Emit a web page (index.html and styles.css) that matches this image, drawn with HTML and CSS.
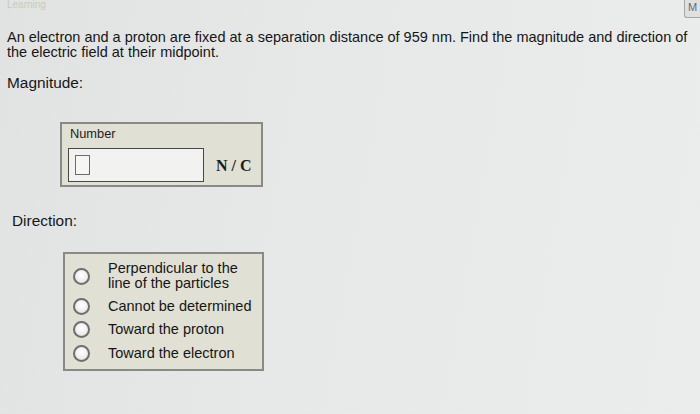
FILE: index.html
```html
<!DOCTYPE html>
<html>
<head>
<meta charset="utf-8">
<link rel="stylesheet" href="styles.css">
</head>
<body>
<div class="page">
  <div class="topbar">
    <span class="brand">Learning</span>
    <span class="topbtn">M</span>
  </div>
  <p class="question">An electron and a proton are fixed at a separation distance of 959 nm. Find the magnitude and direction of the electric field at their midpoint.</p>
  <div class="label mag">Magnitude:</div>
  <div class="numbox">
    <div class="numlabel">Number</div>
    <div class="numrow">
      <div class="input"><span class="caret"></span></div>
      <span class="unit">N / C</span>
    </div>
  </div>
  <div class="label dir">Direction:</div>
  <div class="radiobox">
    <div class="opt"><span class="radio"></span><span class="otext">Perpendicular to the<br>line of the particles</span></div>
    <div class="opt"><span class="radio"></span><span class="otext">Cannot be determined</span></div>
    <div class="opt"><span class="radio"></span><span class="otext">Toward the proton</span></div>
    <div class="opt"><span class="radio"></span><span class="otext">Toward the electron</span></div>
  </div>
</div>
</body>
</html>
```
FILE: styles.css
```css
html, body {
  margin: 0;
  padding: 0;
}
body {
  width: 700px;
  height: 414px;
  overflow: hidden;
  background: linear-gradient(100deg, #e1e3e3 0%, #e7e9e9 45%, #ebedec 100%);
  font-family: "Liberation Sans", Arial, sans-serif;
  color: #161616;
}
.page {
  display: flex;
  flex-direction: column;
  align-items: flex-start;
}
.topbar {
  width: 700px;
  height: 20px;
  display: flex;
  justify-content: space-between;
  align-items: flex-start;
}
.brand {
  font-size: 10px;
  line-height: 10px;
  margin-left: 7px;
  color: #c6ccb8;
}
.topbtn {
  width: 16px;
  height: 18px;
  border: 1px solid #a4a6a6;
  border-top: none;
  border-right: none;
  border-radius: 0 0 0 3px;
  font-size: 11px;
  line-height: 14px;
  padding-left: 3px;
  color: #6a6c6d;
  background: #dfe1e1;
  box-sizing: border-box;
}
.question {
  margin: 9.5px 0 0 7px;
  width: 693px;
  font-size: 14.5px;
  line-height: 15px;
}
.label {
  font-size: 15.4px;
  line-height: 17px;
}
.mag {
  margin: 14.5px 0 0 7px;
}
.numbox {
  margin: 31px 0 0 60px;
  width: 203px;
  height: 65px;
  box-sizing: border-box;
  border: 2px solid #898a86;
  background: #e0e0d4;
  padding: 2.6px 0 0 6px;
}
.numlabel {
  font-size: 12.8px;
  line-height: 14px;
  margin-left: 2px;
  color: #1e1e1e;
}
.numrow {
  display: flex;
  align-items: center;
  margin-top: 7.4px;
}
.input {
  width: 136px;
  height: 34px;
  box-sizing: border-box;
  border: 1px solid #484947;
  background: #f2f2f0;
  display: flex;
  align-items: center;
  padding-left: 6px;
}
.caret {
  width: 15px;
  height: 20px;
  box-sizing: border-box;
  border: 1px solid #6b6c6b;
  background: #f6f6f4;
}
.unit {
  margin-left: 12px;
  margin-top: 3px;
  font-family: "Liberation Serif", "Times New Roman", serif;
  font-weight: bold;
  font-size: 16px;
  color: #1c1c1c;
}
.dir {
  margin: 25px 0 0 12px;
}
.radiobox {
  margin: 23px 0 0 63px;
  width: 201px;
  height: 119px;
  box-sizing: border-box;
  border: 2px solid #898a86;
  background: #e0e0d4;
  padding: 7px 0 0 8px;
  display: flex;
  flex-direction: column;
  gap: 6.5px;
}
.opt {
  display: flex;
  align-items: center;
}
.radio {
  width: 17px;
  height: 17px;
  box-sizing: border-box;
  border: 2.5px solid #6e6f6d;
  border-radius: 50%;
  background: radial-gradient(circle at 50% 40%, #ffffff 0%, #efefef 55%, #d0d0d0 100%);
  flex: none;
}
.otext {
  margin-left: 18px;
  font-size: 14.5px;
  line-height: 15px;
}
```
